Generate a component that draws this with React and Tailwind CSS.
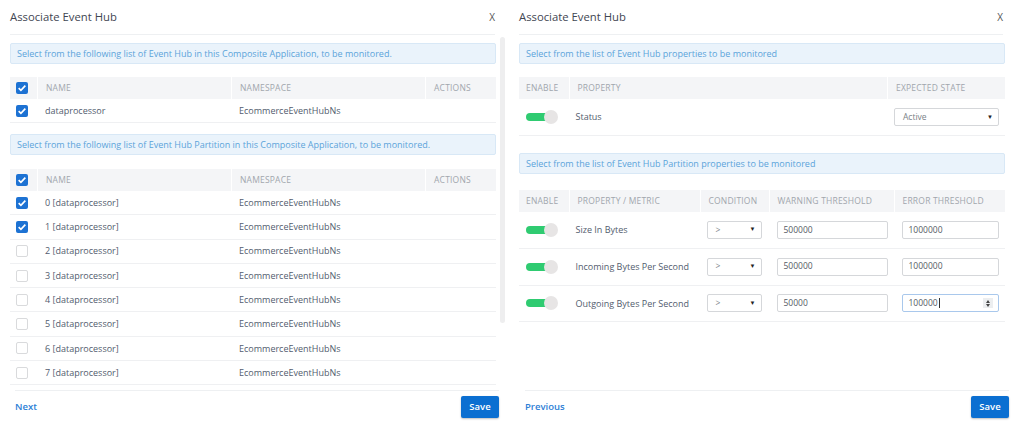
import React from 'react'

const hubs = [{ name: 'dataprocessor', ns: 'EcommerceEventHubNs', on: true }]
const partitions = [0, 1, 2, 3, 4, 5, 6, 7].map(i => ({
  name: `${i} [dataprocessor]`,
  ns: 'EcommerceEventHubNs',
  on: i < 2,
}))
const metrics = [
  { label: 'Size In Bytes', warn: '500000', err: '1000000' },
  { label: 'Incoming Bytes Per Second', warn: '500000', err: '1000000' },
  { label: 'Outgoing Bytes Per Second', warn: '50000', err: '100000', focus: true },
]

function Check({ on }) {
  if (!on) return <span className="block w-3 h-3 rounded-[2px] border border-[#d9dadc] bg-white" />
  return (
    <span className="flex w-3 h-3 rounded-[2px] bg-[#1d72d3] items-center justify-center">
      <svg viewBox="0 0 12 12" className="w-[10px] h-[10px]">
        <path d="M2 6.2 L4.7 8.8 L10 3.2" fill="none" stroke="#fff" strokeWidth="2" />
      </svg>
    </span>
  )
}

function Toggle() {
  return (
    <span className="relative block w-8 h-[14px]">
      <span className="absolute left-0 top-[3px] w-[25px] h-2 rounded-full bg-[#2fcb71]" />
      <span className="absolute right-0 top-0 w-[14px] h-[14px] rounded-full bg-[#e7e5e5]" />
    </span>
  )
}

function Select({ value, w }) {
  return (
    <div className={`${w} h-[18px] flex items-center justify-between border border-[#d5d7da] rounded-[2px] bg-white pl-2 pr-[5px]`}>
      <span className="text-[8.5px] text-[#7a7f87]">{value}</span>
      <span className="text-[6px] text-[#222]">▼</span>
    </div>
  )
}

function Field({ value, w, focus }) {
  return (
    <div className={`${w} h-[18px] flex items-center justify-between rounded-[2px] bg-white pl-[6px] pr-[5px] border ${focus ? 'border-[#a9c8ec]' : 'border-[#d5d7da]'}`}>
      <span className="text-[8.5px] text-[#555b64] flex items-center">
        {value}
        {focus && <span className="inline-block w-px h-[10px] bg-[#333] ml-px" />}
      </span>
      {focus && (
        <span className="w-[10px] h-[10px] bg-[#eceef0] flex flex-col items-center justify-center gap-[1px]">
          <span className="w-0 h-0 border-l-[2.5px] border-r-[2.5px] border-b-[3px] border-l-transparent border-r-transparent border-b-[#444]" />
          <span className="w-0 h-0 border-l-[2.5px] border-r-[2.5px] border-t-[3px] border-l-transparent border-r-transparent border-t-[#444]" />
        </span>
      )}
    </div>
  )
}

function Info({ children }) {
  return (
    <div className="h-[21px] flex items-center px-[6px] bg-[#eaf3fb] border border-[#d8e8f6] rounded-[2px] text-[9px] text-[#5ba3da]">
      {children}
    </div>
  )
}

function Head({ cols, labels }) {
  return (
    <div className={`grid ${cols} h-[22px] bg-[#f4f5f7] text-[8.5px] text-[#a1a6ad] uppercase tracking-[0.2px]`}>
      {labels.map((l, i) => (
        <div key={i} className={`flex items-center pl-2 ${i ? 'border-l border-white' : ''} ${l === 'ENABLE' ? 'pl-[7px]' : ''}`}>
          {l}
        </div>
      ))}
    </div>
  )
}

function Header() {
  return (
    <div className="h-[35px] border-b border-[#eef0f2] flex items-center justify-between text-[#3f4652]">
      <span className="text-[11.3px]">Associate Event Hub</span>
      <span className="text-[10px] text-[#555]">X</span>
    </div>
  )
}

function Footer({ left }) {
  return (
    <div className="h-[40px] border-t border-[#eef0f2] pt-[5px] flex items-start justify-between">
      <div className="h-[22px] flex items-center text-[9.5px] font-semibold text-[#2d80d6]">{left}</div>
      <button className="h-[22px] w-[38px] rounded-[2px] bg-[#0b6fd1] text-white text-[9.5px] font-semibold shadow-[0_1px_2px_rgba(0,0,0,0.25)]">
        Save
      </button>
    </div>
  )
}

function HubTable({ rows, rowH }) {
  const cols = 'grid-cols-[27px_194px_194px_71px]'
  return (
    <div>
      <div className={`grid ${cols} h-[22px] bg-[#f4f5f7] text-[8.5px] text-[#a1a6ad] uppercase tracking-[0.2px]`}>
        <div className="flex items-center pl-[6px]"><Check on /></div>
        <div className="flex items-center pl-2 border-l border-white">Name</div>
        <div className="flex items-center pl-2 border-l border-white">Namespace</div>
        <div className="flex items-center pl-2 border-l border-white">Actions</div>
      </div>
      {rows.map(r => (
        <div key={r.name} className={`grid ${cols} ${rowH} border-b border-[#eff0f2] text-[9px] text-[#525c6e]`}>
          <div className="flex items-center pl-[6px]"><Check on={r.on} /></div>
          <div className="flex items-center pl-2">{r.name}</div>
          <div className="flex items-center pl-2">{r.ns}</div>
          <div />
        </div>
      ))}
    </div>
  )
}

export default function App() {
  return (
    <div className="w-[1024px] h-[430px] bg-white flex font-['Open_Sans',sans-serif] overflow-hidden">
      {/* left dialog */}
      <div className="w-[505px] flex flex-col">
        <div className="pl-[10px] pr-[10px]"><Header /></div>
        <div className="relative h-[355px] overflow-hidden">
          <div className="pl-[10px] pr-[9px] pt-[8px]">
            <Info>Select from the following list of Event Hub in this Composite Application, to be monitored.</Info>
            <div className="mt-[13px]"><HubTable rows={hubs} rowH="h-[24px]" /></div>
            <div className="mt-[11px]"><Info>Select from the following list of Event Hub Partition in this Composite Application, to be monitored.</Info></div>
            <div className="mt-[14px]"><HubTable rows={partitions} rowH="h-[24.3px]" /></div>
          </div>
          <div className="absolute right-0 top-[2px] w-[5px] h-[286px] rounded-full bg-[#eeeeef]" />
        </div>
        <div className="px-[6px] pl-[15px]"><Footer left="Next" /></div>
      </div>

      {/* right dialog */}
      <div className="ml-[3px] w-[507px] flex flex-col">
        <div className="pl-[11px] pr-[12px]"><Header /></div>
        <div className="h-[355px] pl-[11px] pr-[10px] pt-[8px]">
          <Info>Select from the list of Event Hub properties to be monitored</Info>
          <div className="mt-[13px]">
            <Head cols="grid-cols-[49.5px_318.5px_118px]" labels={['ENABLE', 'PROPERTY', 'EXPECTED STATE']} />
            <div className="grid grid-cols-[49.5px_318.5px_118px] h-[37px] border-b border-[#eff0f2] text-[9px] text-[#525c6e]">
              <div className="flex items-center pl-[7px]"><Toggle /></div>
              <div className="flex items-center pl-[7px]">Status</div>
              <div className="flex items-center pl-[7px]"><Select value="Active" w="w-[105px]" /></div>
            </div>
          </div>
          <div className="mt-[17px]"><Info>Select from the list of Event Hub Partition properties to be monitored</Info></div>
          <div className="mt-[16px]">
            <Head
              cols="grid-cols-[49.5px_131px_69px_125px_111.5px]"
              labels={['ENABLE', 'PROPERTY / METRIC', 'CONDITION', 'WARNING THRESHOLD', 'ERROR THRESHOLD']}
            />
            {metrics.map(m => (
              <div key={m.label} className="grid grid-cols-[49.5px_131px_69px_125px_111.5px] h-[36.8px] border-b border-[#eff0f2] text-[9px] text-[#525c6e]">
                <div className="flex items-center pl-[7px]"><Toggle /></div>
                <div className="flex items-center pl-[7px]">{m.label}</div>
                <div className="flex items-center pl-[7px]"><Select value=">" w="w-[55px]" /></div>
                <div className="flex items-center pl-2"><Field value={m.warn} w="w-[111px]" /></div>
                <div className="flex items-center pl-2"><Field value={m.err} w="w-[97px]" focus={m.focus} /></div>
              </div>
            ))}
          </div>
        </div>
        <div className="pl-[17px] pr-[6px]"><Footer left="Previous" /></div>
      </div>
    </div>
  )
}
